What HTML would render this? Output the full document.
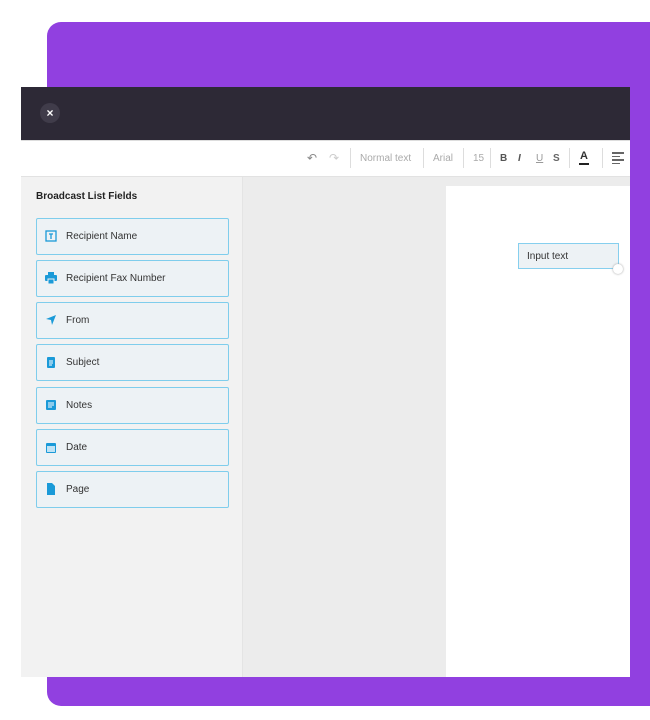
<!DOCTYPE html>
<html><head><style>
*{margin:0;padding:0;box-sizing:border-box}
body{width:650px;height:720px;background:#fff;position:relative;overflow:hidden;font-family:"Liberation Sans",sans-serif}
.purple{position:absolute;left:47px;top:22px;width:620px;height:684px;background:#9140e0;border-radius:14px}
.hdr{position:absolute;left:21px;top:87px;width:609px;height:53px;background:#2d2936}
.x{position:absolute;left:40px;top:103px;width:20px;height:20px;border-radius:50%;background:#403c4a;color:#fff;font-size:12px;font-weight:bold;text-align:center;line-height:20px}
.tb{position:absolute;left:21px;top:140px;width:609px;height:37px;background:#fff;border-bottom:1px solid #e2e2e2;border-top:1px solid #ddd}
.side{position:absolute;left:21px;top:177px;width:222px;height:500px;background:#f2f2f2;border-right:1px solid #e4e4e4}
.main{position:absolute;left:243px;top:177px;width:387px;height:500px;background:#ececec}
.page{position:absolute;left:446px;top:186px;width:184px;height:491px;background:#fff}
h4{position:absolute;left:36px;top:191px;font-size:10px;font-weight:bold;color:#222}
.btn{position:absolute;left:36px;width:193px;height:37px;background:#edf2f5;border:1.5px solid #7fcdec;border-radius:2px;font-size:10px;color:#333;display:flex;align-items:center;padding-left:29px}
.btn svg{position:absolute;left:8px;top:11px}
.t{position:absolute;top:153px;font-size:10px;color:#aaa;line-height:12px}
.sep{position:absolute;top:148px;width:1px;height:20px;background:#ddd}
.inp{position:absolute;left:518px;top:243px;width:101px;height:26px;background:#edf2f5;border:1.5px solid #86cfee;font-size:10px;color:#333;display:flex;align-items:center;padding-left:8px}
.dot{position:absolute;left:613px;top:264px;width:10px;height:10px;border-radius:50%;background:#fff;box-shadow:0 0 2px #999}
</style></head><body>
<div class="purple"></div>
<div class="hdr"></div><div class="x">×</div>
<div class="tb"></div>
<div class="t" style="left:307px;color:#888;font-size:12px;top:152px">↶</div>
<div class="t" style="left:329px;color:#ccc;font-size:12px;top:152px">↷</div>
<div class="sep" style="left:350px"></div>
<div class="t" style="left:360px">Normal text</div>
<div class="sep" style="left:423px"></div>
<div class="t" style="left:433px">Arial</div>
<div class="sep" style="left:463px"></div>
<div class="t" style="left:473px">15</div>
<div class="sep" style="left:490px"></div>
<div class="t" style="left:500px;color:#555;font-weight:bold">B</div>
<div class="t" style="left:518px;color:#555;font-style:italic;font-weight:bold">I</div>
<div class="t" style="left:536px;color:#999;text-decoration:underline">U</div>
<div class="t" style="left:553px;color:#666;font-weight:bold">S</div>
<div class="sep" style="left:569px"></div>
<div class="t" style="left:579px;top:151px;color:#333;font-weight:bold;font-size:11px;border-bottom:2px solid #222;line-height:11px;padding:0 1px 1px">A</div>
<div class="sep" style="left:602px"></div>
<div style="position:absolute;left:612px;top:152px;width:12px">
<div style="height:1.5px;background:#666;margin-bottom:2px"></div><div style="height:1.5px;background:#666;margin-bottom:2px;width:8px"></div><div style="height:1.5px;background:#666;margin-bottom:2px"></div><div style="height:1.5px;background:#666;width:8px"></div></div>
<div class="side"></div><div class="main"></div><div class="page"></div>
<h4>Broadcast List Fields</h4>
<div class="btn" style="top:218px"><svg width="12" height="12"><rect x="1" y="1" width="10" height="10" fill="none" stroke="#1a9ad8" stroke-width="1.3"/><path d="M4 4h4M6 4v5" stroke="#1a9ad8" stroke-width="1.3"/></svg>Recipient Name</div>
<div class="btn" style="top:260px"><svg width="12" height="12"><rect x="3" y="0" width="6" height="3" fill="#1a9ad8"/><rect x="0" y="3" width="12" height="6" rx="1" fill="#1a9ad8"/><rect x="3" y="7" width="6" height="5" fill="#1a9ad8" stroke="#edf2f5"/></svg>Recipient Fax Number</div>
<div class="btn" style="top:302px"><svg width="12" height="12"><path d="M1 5L11 1 7 11 6 6z" fill="#1a9ad8"/></svg>From</div>
<div class="btn" style="top:344px"><svg width="12" height="12"><rect x="2" y="1" width="8" height="11" rx="1" fill="#1a9ad8"/><path d="M4 5h4M4 7h4M4 9h3" stroke="#fff"/></svg>Subject</div>
<div class="btn" style="top:387px"><svg width="12" height="12"><rect x="1" y="1" width="10" height="10" rx="1" fill="#1a9ad8"/><path d="M3 4h6M3 6h6M3 8h4" stroke="#fff"/></svg>Notes</div>
<div class="btn" style="top:429px"><svg width="12" height="12"><rect x="1" y="2" width="10" height="10" rx="1" fill="#1a9ad8"/><rect x="2" y="5" width="8" height="6" fill="#bfe3f5"/></svg>Date</div>
<div class="btn" style="top:471px"><svg width="12" height="12"><path d="M2 0h5l3 3v9H2z" fill="#1a9ad8"/></svg>Page</div>
<div class="inp">Input text</div><div class="dot"></div>
</body></html>
